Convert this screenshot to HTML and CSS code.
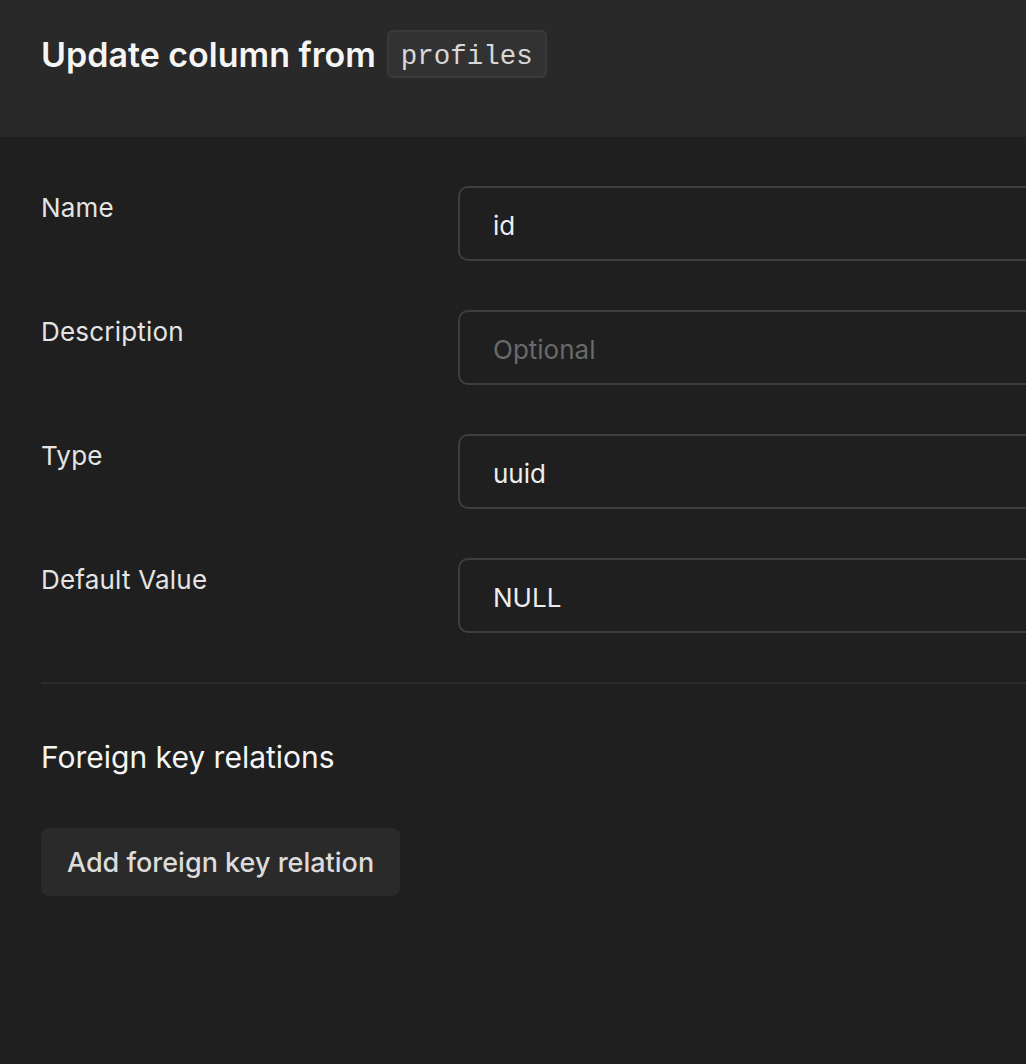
FILE: index.html
```html
<!DOCTYPE html>
<html lang="en">

<head>
    <meta charset="UTF-8">
    <meta name="viewport" content="width=device-width, initial-scale=1.0">
    <title>Update column</title>
    <link rel="stylesheet" href="styles.css">
</head>

<body>
    <div class="painel">
        <div class="cabecalho">
            <h1>Update column from <code class="tabela">profiles</code></h1>
        </div>

        <div class="conteudo">
            <div class="campo">
                <label>Name</label>
                <div class="entrada">id</div>
            </div>
            <div class="campo">
                <label>Description</label>
                <div class="entrada vazio">Optional</div>
            </div>
            <div class="campo">
                <label>Type</label>
                <div class="entrada">uuid</div>
            </div>
            <div class="campo">
                <label>Default Value</label>
                <div class="entrada">NULL</div>
            </div>

            <hr class="divisor">

            <h2>Foreign key relations</h2>
            <button class="botao">Add foreign key relation</button>
        </div>
    </div>
</body>

</html>
```

FILE: styles.css
```css
body {
    margin: 0;
    padding: 0;
    background-color: #1f1f1f;
    font-family: 'Inter', 'Lato', sans-serif;
    color: #ededed;
    overflow: hidden;
}

.cabecalho {
    background-color: #292929;
    height: 137px;
    padding: 30px 41px 0;
    box-sizing: border-box;
}

h1 {
    margin: 0;
    font-size: 34px;
    font-weight: 600;
    color: #f5f5f5;
    display: flex;
    align-items: center;
    gap: 11px;
}

.tabela {
    font-family: 'Liberation Mono', monospace;
    font-size: 27.5px;
    font-weight: 400;
    color: #d8d8d8;
    background-color: #323232;
    border: 2px solid #3a3a3a;
    border-radius: 6px;
    padding: 9px 12px 4px;
}

.conteudo {
    padding: 49px 0 0 41px;
}

.campo {
    display: flex;
    align-items: flex-start;
    margin-bottom: 49px;
}

.campo label {
    width: 417px;
    font-size: 26px;
    letter-spacing: 0.2px;
    padding-top: 6px;
    color: #e4e4e4;
}

.entrada {
    flex: 1;
    height: 75px;
    box-sizing: border-box;
    border: 2px solid #3e3e3e;
    border-right: none;
    border-radius: 10px 0 0 10px;
    padding: 3px 33px 0;
    display: flex;
    align-items: center;
    font-size: 26px;
    color: #ededed;
}

.vazio {
    color: #6a6a6a;
}

.divisor {
    border: none;
    border-top: 2px solid #2c2c2c;
    margin: 0 0 55px;
}

h2 {
    margin: 0 0 53px;
    font-size: 30px;
    font-weight: 400;
    color: #f5f5f5;
}

.botao {
    font-family: inherit;
    font-size: 27px;
    font-weight: 500;
    color: #dcdcdc;
    background-color: #2a2a2a;
    border: none;
    border-radius: 8px;
    height: 68px;
    padding: 0 26px;
    cursor: pointer;
}
```
